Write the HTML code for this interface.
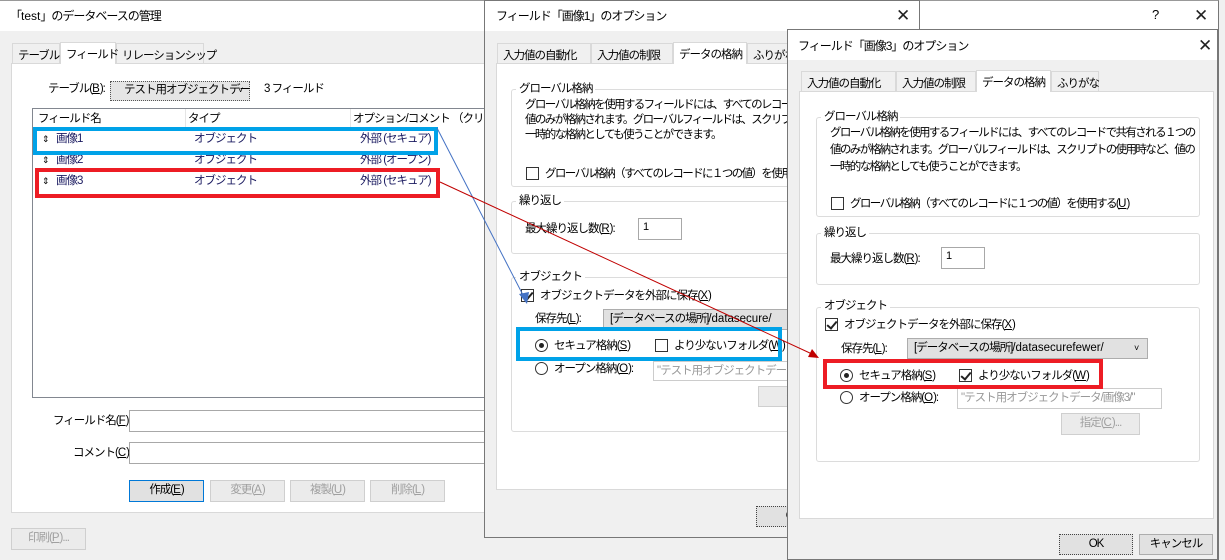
<!DOCTYPE html>
<html><head><meta charset="utf-8">
<style>
*{box-sizing:border-box;margin:0;padding:0}
body{width:1225px;height:560px;overflow:hidden;background:#f0f0f0;position:relative;font:11px "Liberation Sans","Noto Sans CJK JP",sans-serif;color:#000}
.w{position:absolute;overflow:hidden;background:#f0f0f0}
.tb{position:absolute;left:0;top:0;right:0;height:30px;background:#fff}
.t{position:absolute;white-space:nowrap;letter-spacing:-1px;line-height:14px;font-size:11.5px}
.tab{position:absolute;height:21px;border:1px solid #d9d9d9;border-bottom:none;background:#f0f0f0;padding:3px 0 0 5px;white-space:nowrap;letter-spacing:-1px;font-size:11.5px}
.tab.a{background:#fff;height:22px;z-index:2}
.panel{position:absolute;background:#fff;border:1px solid #d9d9d9}
.grp{position:absolute;border:1px solid #dcdcdc;border-radius:3px}
.gl{position:absolute;background:#fff;padding:0 3px;white-space:nowrap;letter-spacing:-1px;font-size:11.5px;line-height:14px}
.inp{position:absolute;background:#fff;border:1px solid #a8a8a8}
.cb{position:absolute;width:13px;height:13px;border:1px solid #333;background:#fff}
.cb.c::after{content:"";position:absolute;left:3px;top:0px;width:4px;height:8px;border:solid #222;border-width:0 2px 2px 0;transform:rotate(40deg)}
.rd{position:absolute;width:13px;height:13px;border:1px solid #333;border-radius:50%;background:#fff}
.rd.c::after{content:"";position:absolute;left:3px;top:3px;width:5px;height:5px;border-radius:50%;background:#222}
.btn{position:absolute;border:1px solid #adadad;background:#e1e1e1;text-align:center;line-height:19px;letter-spacing:-1px;font-size:11.5px;white-space:nowrap}
.dis{color:#a0a0a0;background:#ebebeb;border-color:#cfcfcf}
.box{position:absolute;border:4px solid}
.x{position:absolute;font-size:17px;line-height:17px;color:#222}
u,.l{letter-spacing:0}
u{text-decoration:underline}
.para{letter-spacing:-1.6px}
</style></head><body>

<!-- main window -->
<div class="w" style="left:0;top:0;width:1219px;height:560px;border-right:1px solid #777;border-top:1px solid #999">
 <div class="tb"></div>
 <div class="t" style="left:10px;top:8px;font-size:12px">「<span class="l">test</span>」のデータベースの管理</div>
 <div class="t" style="left:1152px;top:7px;font-size:13px">?</div>
 <div class="x" style="left:1194px;top:6px">✕</div>
 <div class="tab" style="left:12px;top:42px;width:48px">テーブル</div>
 <div class="tab a" style="left:60px;top:41px;width:56px">フィールド</div>
 <div class="tab" style="left:116px;top:42px;width:88px">リレーションシップ</div>
 <div class="panel" style="left:11px;top:62px;width:1300px;height:450px"></div>
 <div class="t" style="left:48px;top:81px">テーブル(<u>B</u>):</div>
 <div class="btn" style="left:110px;top:80px;width:140px;height:20px;border:1px dotted #555;background:#e5e5e5;text-align:left;padding-left:13px;line-height:17px">テスト用オブジェクトデー<span style="position:absolute;left:127px;font-size:9px">˅</span></div>
 <div class="t" style="left:264px;top:81px">3 フィールド</div>
 <div style="position:absolute;left:32px;top:107px;width:800px;height:290px;border:1px solid #828790;background:#fff"></div>
 <div style="position:absolute;left:185px;top:108px;width:1px;height:19px;background:#e5e5e5"></div>
 <div style="position:absolute;left:350px;top:108px;width:1px;height:19px;background:#e5e5e5"></div>
 <div class="t" style="left:38px;top:111px">フィールド名</div>
 <div class="t" style="left:188px;top:111px">タイプ</div>
 <div class="t" style="left:353px;top:111px">オプション/コメント</div>
 <div class="t" style="left:452px;top:111px;background:#fff">（クリック</div>
 <div class="t" style="left:42px;top:131px;font-size:9px">⇕</div><div class="t" style="left:56px;top:131px;color:#1a1a60">画像1</div><div class="t" style="left:194px;top:131px;color:#1a1a60">オブジェクト</div><div class="t" style="left:360px;top:131px;color:#1a1a60">外部 (セキュア)</div>
 <div class="t" style="left:42px;top:152px;font-size:9px">⇕</div><div class="t" style="left:56px;top:152px;color:#1a1a60">画像2</div><div class="t" style="left:194px;top:152px;color:#1a1a60">オブジェクト</div><div class="t" style="left:360px;top:152px;color:#1a1a60">外部 (オープン)</div>
 <div class="t" style="left:42px;top:173px;font-size:9px">⇕</div><div class="t" style="left:56px;top:173px;color:#1a1a60">画像3</div><div class="t" style="left:194px;top:173px;color:#1a1a60">オブジェクト</div><div class="t" style="left:360px;top:173px;color:#1a1a60">外部 (セキュア)</div>
 <div class="box" style="left:33px;top:126px;width:405px;height:28px;border-color:#00a2e8"></div>
 <div class="box" style="left:35px;top:167px;width:405px;height:30px;border-color:#ed1c24"></div>
 <div class="t" style="left:53px;top:413px">フィールド名(<u>F</u>):</div>
 <div class="inp" style="left:129px;top:409px;width:800px;height:22px"></div>
 <div class="t" style="left:73px;top:445px">コメント(<u>C</u>):</div>
 <div class="inp" style="left:129px;top:441px;width:800px;height:22px"></div>
 <div class="btn" style="left:129px;top:479px;width:75px;height:22px;border-color:#0078d7;background:#e1e1e1">作成(<u>E</u>)</div>
 <div class="btn dis" style="left:210px;top:479px;width:75px;height:22px">変更(<u>A</u>)</div>
 <div class="btn dis" style="left:290px;top:479px;width:75px;height:22px">複製(<u>U</u>)</div>
 <div class="btn dis" style="left:370px;top:479px;width:75px;height:22px">削除(<u>L</u>)</div>
 <div class="btn dis" style="left:11px;top:527px;width:75px;height:22px">印刷(<u>P</u>)...</div>
</div>

<!-- dialog 2 -->
<div class="w" style="left:484px;top:0;width:436px;height:538px;border:1px solid #777">
 <div class="tb"></div>
 <div class="t" style="left:11px;top:8px;font-size:12px">フィールド「画像1」のオプション</div>
 <div class="x" style="left:411px;top:6px">✕</div>
 <div class="tab" style="left:12px;top:42px;width:94px">入力値の自動化</div>
 <div class="tab" style="left:106px;top:42px;width:82px">入力値の制限</div>
 <div class="tab a" style="left:188px;top:41px;width:74px">データの格納</div>
 <div class="tab" style="left:262px;top:42px;width:60px">ふりがな</div>
 <div class="panel" style="left:11px;top:62px;width:500px;height:427px"></div>
 <div class="grp" style="left:26px;top:88px;width:500px;height:98px"></div>
 <div class="gl" style="left:31px;top:81px">グローバル格納</div>
 <div class="t para" style="left:40px;top:97px;line-height:15px">グローバル格納を使用するフィールドには、すべてのレコード<br>値のみが格納されます。グローバルフィールドは、スクリプト<br>一時的な格納としても使うことができます。</div>
 <div class="cb" style="left:41px;top:166px"></div>
 <div class="t para" style="left:60px;top:166px">グローバル格納（すべてのレコードに１つの値）を使用</div>
 <div class="grp" style="left:26px;top:200px;width:500px;height:53px"></div>
 <div class="gl" style="left:31px;top:193px">繰り返し</div>
 <div class="t" style="left:40px;top:221px">最大繰り返し数(<u>R</u>):</div>
 <div class="inp" style="left:153px;top:217px;width:44px;height:22px;padding:2px 4px">1</div>
 <div class="grp" style="left:26px;top:276px;width:500px;height:155px"></div>
 <div class="gl" style="left:31px;top:269px">オブジェクト</div>
 <div class="cb c" style="left:36px;top:288px"></div>
 <div class="t" style="left:55px;top:288px">オブジェクトデータを外部に保存(<u>X</u>)</div>
 <div class="t" style="left:50px;top:311px">保存先(<u>L</u>):</div>
 <div class="btn" style="left:118px;top:308px;width:300px;height:21px;text-align:left;padding-left:6px;line-height:18px">[データベースの場所]<span class="l">/datasecure/</span></div>
 <div class="rd c" style="left:50px;top:338px"></div>
 <div class="t" style="left:69px;top:338px">セキュア格納(<u>S</u>)</div>
 <div class="cb" style="left:170px;top:338px"></div>
 <div class="t" style="left:189px;top:338px">より少ないフォルダ(<u>W</u>)</div>
 <div class="rd" style="left:50px;top:361px"></div>
 <div class="t" style="left:69px;top:361px">オープン格納(<u>O</u>):</div>
 <div class="inp" style="left:168px;top:360px;width:300px;height:20px;border-color:#ccc;color:#999;padding:2px 3px"><span class="t" style="position:static">"テスト用オブジェクトデータ/画</span></div>
 <div class="btn dis" style="left:273px;top:385px;width:78px;height:21px">指定</div>
 <div class="btn" style="left:271px;top:505px;width:74px;height:21px;border:1px dotted #444;background:#e1e1e1">OK</div>
 <div class="box" style="left:31px;top:326px;width:266px;height:34px;border-color:#00a2e8"></div>
</div>

<!-- dialog 3 -->
<div class="w" style="left:787px;top:29px;width:431px;height:531px;border:1px solid #777">
 <div class="tb"></div>
 <div class="t" style="left:10px;top:9px;font-size:12px">フィールド「画像3」のオプション</div>
 <div class="x" style="left:410px;top:7px">✕</div>
 <div class="tab" style="left:13px;top:41px;width:95px">入力値の自動化</div>
 <div class="tab" style="left:108px;top:41px;width:80px">入力値の制限</div>
 <div class="tab a" style="left:188px;top:40px;width:75px">データの格納</div>
 <div class="tab" style="left:263px;top:41px;width:48px">ふりがな</div>
 <div class="panel" style="left:11px;top:61px;width:415px;height:428px"></div>
 <div class="grp" style="left:28px;top:87px;width:384px;height:100px"></div>
 <div class="gl" style="left:33px;top:80px">グローバル格納</div>
 <div class="t para" style="left:42px;top:95px;line-height:17px">グローバル格納を使用するフィールドには、すべてのレコードで共有される１つの<br>値のみが格納されます。グローバルフィールドは、スクリプトの使用時など、値の<br>一時的な格納としても使うことができます。</div>
 <div class="cb" style="left:43px;top:167px"></div>
 <div class="t para" style="left:62px;top:167px">グローバル格納（すべてのレコードに１つの値）を使用する(<u>U</u>)</div>
 <div class="grp" style="left:28px;top:203px;width:384px;height:52px"></div>
 <div class="gl" style="left:33px;top:196px">繰り返し</div>
 <div class="t" style="left:42px;top:222px">最大繰り返し数(<u>R</u>):</div>
 <div class="inp" style="left:153px;top:217px;width:44px;height:22px;padding:2px 4px">1</div>
 <div class="grp" style="left:28px;top:277px;width:384px;height:155px"></div>
 <div class="gl" style="left:33px;top:269px">オブジェクト</div>
 <div class="cb c" style="left:37px;top:288px"></div>
 <div class="t" style="left:56px;top:288px">オブジェクトデータを外部に保存(<u>X</u>)</div>
 <div class="t" style="left:53px;top:312px">保存先(<u>L</u>):</div>
 <div class="btn" style="left:119px;top:308px;width:241px;height:21px;text-align:left;padding-left:6px;line-height:18px">[データベースの場所]<span class="l">/datasecurefewer/</span><span style="position:absolute;left:226px;font-size:9px">˅</span></div>
 <div class="rd c" style="left:52px;top:339px"></div>
 <div class="t" style="left:71px;top:339px">セキュア格納(<u>S</u>)</div>
 <div class="cb c" style="left:171px;top:339px"></div>
 <div class="t" style="left:190px;top:339px">より少ないフォルダ(<u>W</u>)</div>
 <div class="rd" style="left:52px;top:361px"></div>
 <div class="t" style="left:71px;top:361px">オープン格納(<u>O</u>):</div>
 <div class="inp" style="left:169px;top:358px;width:205px;height:21px;border-color:#ccc;color:#999;padding:2px 3px"><span class="t" style="position:static">"テスト用オブジェクトデータ/画像3/"</span></div>
 <div class="btn dis" style="left:273px;top:383px;width:79px;height:22px">指定(<u>C</u>)...</div>
 <div class="btn" style="left:271px;top:504px;width:74px;height:21px;border:1px dotted #444">OK</div>
 <div class="btn" style="left:351px;top:504px;width:74px;height:21px">キャンセル</div>
 <div class="box" style="left:35px;top:329px;width:280px;height:30px;border-color:#ed1c24"></div>
</div>

<svg style="position:absolute;left:0;top:0" width="1225" height="560">
 <line x1="437" y1="128" x2="524" y2="297" stroke="#4472c4" stroke-width="1"/>
 <polygon points="527,304 519,294 529,292" fill="#4472c4"/>
 <line x1="440" y1="182" x2="812" y2="354" stroke="#c00000" stroke-width="1"/>
 <polygon points="819,358 808,357 812,349" fill="#c00000"/>
</svg>
</body></html>
